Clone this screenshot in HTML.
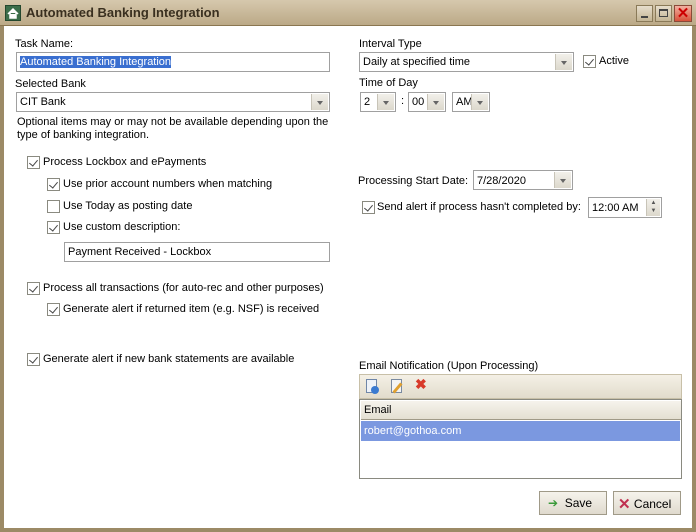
<!DOCTYPE html>
<html><head><style>
*{box-sizing:border-box;margin:0;padding:0}
body{width:696px;height:532px;overflow:hidden;background:#fff;font-family:"Liberation Sans",sans-serif;font-size:11px;color:#000;position:relative}
.a{position:absolute;white-space:nowrap}
.win{position:absolute;left:0;top:0;width:696px;height:532px;border:4px solid #9c8a66;border-top:none;background:#fff}
.title{position:absolute;left:0;top:0;width:696px;height:26px;background:linear-gradient(#d6c8ad,#bba987);border-bottom:1px solid #8a7650}
.inp{position:absolute;border:1px solid #a0a0a0;background:#fff;height:20px;padding:3px 3px;white-space:nowrap}
.dd{position:absolute;width:17px;top:1px;bottom:1px;right:1px;background:linear-gradient(#f2f0ea,#dcd8cc);border-left:1px solid #c8c4b8}
.dd:after{content:"";position:absolute;left:5px;top:7px;border:3px solid transparent;border-top:4px solid #666}
.cb{position:absolute;width:13px;height:13px;border:1px solid #8a8a80;background:#fff}
.cb.c:after{content:"";position:absolute;left:3px;top:1px;width:4px;height:7px;border:solid #444;border-width:0 1px 1px 0;transform:rotate(40deg)}
.btn{position:absolute;height:24px;border:1px solid #a09a88;background:linear-gradient(#f6f3ec,#e0dace);font-size:12px;padding-top:4px}
</style></head><body>
<div class="win"></div>
<div class="title">
 <div class="a" style="left:5px;top:5px;width:16px;height:16px;background:#3c6e4a;border:1px solid #24482e"><svg width="14" height="14"><path d="M2 8L7 3l5 5M4 7v5h6V7" stroke="#fff" stroke-width="1.5" fill="#fff"/></svg></div>
 <div class="a" style="left:26px;top:5px;font-size:13px;font-weight:bold;color:#3a3020">Automated Banking Integration</div>
 <div class="a" style="left:636px;top:5px;width:17px;height:17px;background:linear-gradient(#e6ddcc,#c4b594);border:1px solid #8a7a58"><div class="a" style="left:4px;top:10px;width:7px;height:2px;background:#444"></div></div>
 <div class="a" style="left:655px;top:5px;width:17px;height:17px;background:linear-gradient(#e6ddcc,#c4b594);border:1px solid #8a7a58"><div class="a" style="left:3px;top:3px;width:9px;height:8px;border:1px solid #444;border-top-width:2px"></div></div>
 <div class="a" style="left:674px;top:5px;width:18px;height:17px;background:linear-gradient(#f2b0a0,#d8523a);border:1px solid #8a4a38;color:#c00;font-weight:bold;font-size:15px;text-align:center;line-height:15px">✕</div>
</div>

<div class="a" style="left:15px;top:38px">Task Name:</div>
<div class="inp" style="left:16px;top:52px;width:314px"><span style="background:#3a6fd0;color:#fff">Automated Banking Integration</span></div>
<div class="a" style="left:15px;top:78px">Selected Bank</div>
<div class="inp" style="left:16px;top:92px;width:314px">CIT Bank<div class="dd"></div></div>
<div class="a" style="left:17px;top:116px;line-height:13px">Optional items may or may not be available depending upon the<br>type of banking integration.</div>

<div class="cb c" style="left:27px;top:156px"></div><div class="a" style="left:43px;top:156px">Process Lockbox and ePayments</div>
<div class="cb c" style="left:47px;top:178px"></div><div class="a" style="left:63px;top:178px">Use prior account numbers when matching</div>
<div class="cb" style="left:47px;top:200px"></div><div class="a" style="left:63px;top:200px">Use Today as posting date</div>
<div class="cb c" style="left:47px;top:221px"></div><div class="a" style="left:63px;top:221px">Use custom description:</div>
<div class="inp" style="left:64px;top:242px;width:266px">Payment Received - Lockbox</div>

<div class="cb c" style="left:27px;top:282px"></div><div class="a" style="left:43px;top:282px">Process all transactions (for auto-rec and other purposes)</div>
<div class="cb c" style="left:47px;top:303px"></div><div class="a" style="left:63px;top:303px">Generate alert if returned item (e.g. NSF) is received</div>
<div class="cb c" style="left:27px;top:353px"></div><div class="a" style="left:43px;top:353px">Generate alert if new bank statements are available</div>

<div class="a" style="left:359px;top:38px">Interval Type</div>
<div class="inp" style="left:359px;top:52px;width:215px">Daily at specified time<div class="dd"></div></div>
<div class="cb c" style="left:583px;top:55px"></div><div class="a" style="left:599px;top:55px">Active</div>
<div class="a" style="left:359px;top:77px">Time of Day</div>
<div class="inp" style="left:360px;top:92px;width:36px">2<div class="dd"></div></div>
<div class="a" style="left:401px;top:95px">:</div>
<div class="inp" style="left:408px;top:92px;width:38px">00<div class="dd"></div></div>
<div class="inp" style="left:452px;top:92px;width:38px">AM<div class="dd"></div></div>

<div class="a" style="left:358px;top:175px">Processing Start Date:</div>
<div class="inp" style="left:473px;top:170px;width:100px;padding-top:4px">7/28/2020<div class="dd"></div></div>
<div class="cb c" style="left:362px;top:201px"></div><div class="a" style="left:377px;top:201px">Send alert if process hasn't completed by:</div>
<div class="inp" style="left:588px;top:197px;width:74px;padding-top:4px;height:21px">12:00 AM<div class="a" style="right:1px;top:1px;width:14px;height:17px;background:linear-gradient(#f2f0ea,#dcd8cc);border-left:1px solid #c8c4b8;font-size:6px;color:#555;text-align:center;line-height:8px">▲<br>▼</div></div>

<div class="a" style="left:359px;top:360px">Email Notification (Upon Processing)</div>
<div class="a" style="left:359px;top:374px;width:323px;height:25px;background:linear-gradient(#f4f0e6,#e2dccc);border:1px solid #c8c0a8"></div>
<div class="a" style="left:366px;top:379px;width:11px;height:14px;border:1px solid #6f86a8;background:#eef2f8"></div>
<div class="a" style="left:371px;top:386px;width:8px;height:8px;border-radius:50%;background:#3a7ad0"></div>
<div class="a" style="left:391px;top:379px;width:11px;height:14px;border:1px solid #7a8aa0;background:#f4f4f4"></div>
<div class="a" style="left:396px;top:382px;width:3px;height:12px;background:#e0a030;transform:rotate(40deg)"></div>
<div class="a" style="left:415px;top:376px;color:#d83a2a;font-size:14px;font-weight:bold">✖</div>
<div class="a" style="left:359px;top:399px;width:323px;height:80px;border:1px solid #8a8a80;background:#fff"></div>
<div class="a" style="left:361px;top:401px;width:320px;height:19px;background:linear-gradient(#f6f3ec,#e4dfd2);border-bottom:1px solid #a09a88;padding:3px 3px">Email</div>
<div class="a" style="left:361px;top:421px;width:319px;height:20px;background:#7b98e0;color:#fff;padding:4px 3px">robert@gothoa.com</div>

<div class="btn" style="left:539px;top:491px;width:68px;padding-left:8px"><span style="color:#3a9a3a">➔</span>&nbsp; Save</div>
<div class="btn" style="left:613px;top:491px;width:68px;padding-left:4px;padding-top:3px"><span style="color:#c03050;font-weight:bold;font-size:15px;vertical-align:-1px">✕</span> Cancel</div>
</body></html>
